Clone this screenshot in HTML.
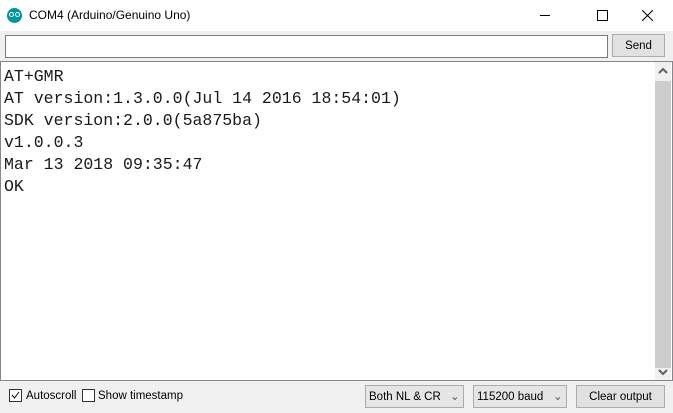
<!DOCTYPE html>
<html><head><style>
body{margin:0;width:673px;height:413px;background:#f0f0f0;position:relative;overflow:hidden;font-family:"Liberation Sans",sans-serif;font-size:12px;color:#000}
div{position:absolute;box-sizing:border-box}
.title{left:0;top:0;width:673px;height:31px;background:#fff}
.mono{font-family:"Liberation Mono",monospace;font-size:16.55px;line-height:22px;white-space:pre;color:#1a1a1a}
.btn{background:#e1e1e1;border:1px solid #adadad;text-align:center;line-height:22px}
.dd{background:#e5e5e5;border:1px solid #acacac;line-height:22px;padding-left:3px}
.cb{width:13px;height:13px;border:1px solid #333;background:#fff}
.sm{font-size:11.5px}
</style></head><body>
<div class="title">
 <div style="left:7px;top:8px;width:15px;height:15px;border-radius:50%;background:#00979c"></div>
 <div style="left:9px;top:12px;width:5px;height:5px;border:1.5px solid #fff;border-radius:50%"></div>
 <div style="left:15px;top:12px;width:5px;height:5px;border:1.5px solid #fff;border-radius:50%"></div>
 <div style="left:29px;top:8px;font-size:12px">COM4 (Arduino/Genuino Uno)</div>
 <div style="left:540px;top:15px;width:10px;height:1px;background:#000"></div>
 <div style="left:597px;top:10px;width:11px;height:11px;border:1px solid #000"></div>
 <svg style="position:absolute;left:642px;top:10px" width="11" height="11"><path d="M0 0L11 11M11 0L0 11" stroke="#000" stroke-width="1"/></svg>
</div>
<div style="left:5px;top:35px;width:603px;height:23px;background:#fff;border:1px solid #7a7a7a"></div>
<div class="btn sm" style="left:612px;top:34px;width:53px;height:23px">Send</div>
<div style="left:0;top:61px;width:673px;height:320px;background:#fff;border:1px solid #828790"></div>
<div class="mono" style="left:4px;top:66px">AT+GMR
AT version:1.3.0.0(Jul 14 2016 18:54:01)
SDK version:2.0.0(5a875ba)
v1.0.0.3
Mar 13 2018 09:35:47
OK</div>
<div style="left:655px;top:62px;width:16px;height:318px;background:#f0f0f0"></div>
<div style="left:655px;top:81px;width:16px;height:287px;background:#cdcdcd"></div>
<svg style="position:absolute;left:658px;top:67px" width="10" height="8"><path d="M1 6L5 2L9 6" stroke="#606060" stroke-width="2" fill="none"/></svg>
<svg style="position:absolute;left:658px;top:368px" width="10" height="8"><path d="M1 2L5 6L9 2" stroke="#606060" stroke-width="2" fill="none"/></svg>
<div class="cb" style="left:9px;top:389px"></div>
<svg style="position:absolute;left:10px;top:390px" width="11" height="11"><path d="M2 5L4.5 8L9 2" stroke="#000" fill="none"/></svg>
<div class="sm" style="left:26px;top:390px">Autoscroll</div>
<div class="cb" style="left:82px;top:389px"></div>
<div class="sm" style="left:98px;top:390px">Show timestamp</div>
<div class="dd sm" style="left:365px;top:385px;width:99px;height:23px">Both NL &amp; CR<span style="position:absolute;left:84px;color:#555">&#8964;</span></div>
<div class="dd sm" style="left:473px;top:385px;width:94px;height:23px">115200 baud<span style="position:absolute;left:79px;color:#555">&#8964;</span></div>
<div class="btn sm" style="left:576px;top:385px;width:89px;height:23px">Clear output</div>
</body></html>
